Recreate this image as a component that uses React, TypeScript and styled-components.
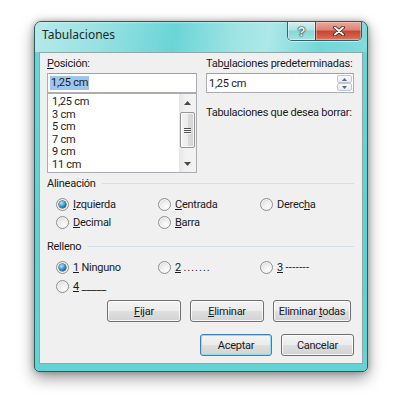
import styled, { createGlobalStyle } from 'styled-components'

const GlobalStyle = createGlobalStyle`
	html, body {
		margin: 0;
		padding: 0;
		background: #fff;
	}
	body {
		font-family: Roboto, 'Liberation Sans', Arial, sans-serif;
		font-size: 11px;
		letter-spacing: -0.25px;
		color: #1b1b1b;
	}
	* {
		box-sizing: border-box;
	}
	u {
		text-underline-offset: 1px;
	}
`

const positions = ['1,25 cm', '3 cm', '5 cm', '7 cm', '9 cm', '11 cm']

const alignOptions = [
	{ text: 'Izquierda', hot: 0, checked: true },
	{ text: 'Centrada', hot: 0 },
	{ text: 'Derecha', hot: 5 },
	{ text: 'Decimal', hot: 0 },
	{ text: 'Barra', hot: 0 },
]

// relleno: number is the mnemonic, leader is the sample of the fill
const fillOptions = [
	{ num: '1', leader: 'Ninguno', spacing: -0.25, checked: true },
	{ num: '2', leader: '.......', spacing: 1 },
	{ num: '3', leader: '-------', spacing: 0.4 },
	{ num: '4', leader: '_____', spacing: 0 },
]

function Hot({ text, at }: { text: string; at: number }) {
	return (
		<span>
			{text.slice(0, at)}
			<u>{text[at]}</u>
			{text.slice(at + 1)}
		</span>
	)
}

function Arrow({ up }: { up?: boolean }) {
	return (
		<svg width="7" height="4" viewBox="0 0 7 4">
			<path d={up ? 'M0 4 L3.5 0 L7 4 Z' : 'M0 0 L3.5 4 L7 0 Z'} fill="#4a4a4a" />
		</svg>
	)
}

function SpinArrow({ up }: { up?: boolean }) {
	return (
		<svg width="5" height="3" viewBox="0 0 5 3">
			<path d={up ? 'M0 3 L2.5 0 L5 3 Z' : 'M0 0 L2.5 3 L5 0 Z'} fill="#4f6a8f" />
		</svg>
	)
}

function App() {
	return (
		<Page>
			<GlobalStyle />
			<Window>
				<TitleBar>
					<Title>Tabulaciones</Title>
					<CaptionGroup>
						<HelpButton>?</HelpButton>
						<CloseButton>
							<svg width="12" height="10" viewBox="0 0 12 10">
								<path d="M2 1.5 L10 8.5 M10 1.5 L2 8.5" stroke="#3b1c16" strokeWidth="3.6" strokeLinecap="round" />
								<path d="M2 1.5 L10 8.5 M10 1.5 L2 8.5" stroke="#fff" strokeWidth="2" strokeLinecap="round" />
							</svg>
						</CloseButton>
					</CaptionGroup>
				</TitleBar>
				<Body>
					<Content>
						<TopGrid>
							<Column>
								<FieldLabel>
									<Hot text="Posición:" at={0} />
								</FieldLabel>
								<TextBox>
									<Selected>1,25 cm</Selected>
								</TextBox>
								<ListBox>
									<ListItems>
										{positions.map((p) => (
											<ListItem key={p}>{p}</ListItem>
										))}
									</ListItems>
									<ScrollBar>
										<ScrollArrow>
											<Arrow up />
										</ScrollArrow>
										<ScrollTrack>
											<Thumb>
												<Grip />
												<Grip />
												<Grip />
											</Thumb>
										</ScrollTrack>
										<ScrollArrow>
											<Arrow />
										</ScrollArrow>
									</ScrollBar>
								</ListBox>
							</Column>
							<Column>
								<FieldLabel>
									<Hot text="Tabulaciones predeterminadas:" at={3} />
								</FieldLabel>
								<SpinBox>
									<SpinValue>1,25 cm</SpinValue>
									<SpinButtons>
										<SpinButton>
											<SpinArrow up />
										</SpinButton>
										<SpinButton>
											<SpinArrow />
										</SpinButton>
									</SpinButtons>
								</SpinBox>
								<FieldLabel $top={13}>Tabulaciones que desea borrar:</FieldLabel>
							</Column>
						</TopGrid>

						<GroupHeader $top={3.5}>
							<span>Alineación</span>
							<Rule />
						</GroupHeader>
						<RadioGrid $top={5.5} $row={18}>
							{alignOptions.map((o) => (
								<RadioRow key={o.text}>
									<RadioDot $checked={o.checked} />
									<Hot text={o.text} at={o.hot} />
								</RadioRow>
							))}
						</RadioGrid>

						<GroupHeader $top={8.5}>
							<span>Relleno</span>
							<Rule />
						</GroupHeader>
						<RadioGrid $top={5.5} $row={19}>
							{fillOptions.map((o) => (
								<RadioRow key={o.num}>
									<RadioDot $checked={o.checked} />
									<span>
										<u>{o.num}</u> <Leader $spacing={o.spacing}>{o.leader}</Leader>
									</span>
								</RadioRow>
							))}
						</RadioGrid>

						<ButtonRow $top={4} $right={3}>
							<Button $w={74}>
								<Hot text="Fijar" at={0} />
							</Button>
							<Button $w={74}>
								<Hot text="Eliminar" at={0} />
							</Button>
							<Button $w={78}>
								<Hot text="Eliminar todas" at={9} />
							</Button>
						</ButtonRow>
						<ButtonRow $top={12} $right={0}>
							<Button $w={72} $primary>
								Aceptar
							</Button>
							<Button $w={73}>Cancelar</Button>
						</ButtonRow>
					</Content>
				</Body>
			</Window>
		</Page>
	)
}

export default App

const Page = styled.div`
	width: 400px;
	height: 397px;
	padding: 21px 0 0 34px;
	overflow: hidden;
`

const Window = styled.div`
	width: 334px;
	height: 351px;
	display: flex;
	flex-direction: column;
	border: 1px solid #2f5b5d;
	border-radius: 7px 7px 5px 5px;
	background: linear-gradient(180deg, #6cd5d6 0%, #5fd1d2 60%, #64d3d4 100%);
	box-shadow:
		0 6px 16px rgba(0, 0, 0, 0.4),
		0 0 6px rgba(0, 0, 0, 0.28);
	overflow: hidden;
`

const TitleBar = styled.div`
	height: 30px;
	flex: none;
	display: flex;
	align-items: flex-start;
	padding: 0 5px 0 7px;
	background:
		linear-gradient(180deg, rgba(255, 255, 255, 0.35) 0px, rgba(255, 255, 255, 0) 2px),
		linear-gradient(
			100deg,
			rgba(255, 255, 255, 0.5) 0%,
			rgba(255, 255, 255, 0.3) 20%,
			rgba(255, 255, 255, 0) 42%,
			rgba(255, 255, 255, 0.35) 60%,
			rgba(255, 255, 255, 0.45) 70%,
			rgba(255, 255, 255, 0.05) 86%,
			rgba(255, 255, 255, 0.15) 100%
		);
`

const Title = styled.div`
	margin-top: 5px;
	font-family: 'Noto Sans', Roboto, sans-serif;
	font-size: 12px;
	line-height: 16px;
	letter-spacing: 0;
	color: #1e2a2a;
`

const CaptionGroup = styled.div`
	margin-left: auto;
	display: flex;
	height: 19px;
	border: 1px solid rgba(30, 50, 60, 0.75);
	border-top: none;
	border-radius: 0 0 5px 5px;
	overflow: hidden;
	box-shadow: 0 1px 0 rgba(255, 255, 255, 0.5);
`

const HelpButton = styled.div`
	width: 27px;
	display: flex;
	align-items: center;
	justify-content: center;
	font-family: 'Liberation Sans', Arial, sans-serif;
	font-weight: bold;
	font-size: 13px;
	letter-spacing: 0;
	color: #f2f6f6;
	text-shadow:
		0 0 1px #1e2e2e,
		0 0 1px #1e2e2e,
		0 0 2px #1e2e2e;
	background: linear-gradient(180deg, #d3f0f0 0%, #aee3e3 45%, #86d6d7 50%, #a5e2e2 100%);
	box-shadow: inset 0 0 0 1px rgba(255, 255, 255, 0.45);
`

const CloseButton = styled.div`
	width: 46px;
	display: flex;
	align-items: center;
	justify-content: center;
	border-left: 1px solid rgba(30, 50, 60, 0.75);
	background: linear-gradient(180deg, #eaa99c 0%, #dc8372 45%, #c8452e 50%, #d3624a 85%, #e0836c 100%);
	box-shadow: inset 0 0 0 1px rgba(255, 220, 210, 0.4);
`

const Body = styled.div`
	flex: 1;
	display: flex;
	padding: 0 4px 7px 4px;
`

const Content = styled.div`
	flex: 1;
	display: flex;
	flex-direction: column;
	background: #f0f0f0;
	border: 1px solid #8fa7a9;
	padding: 4px 8px 7px 7px;
`

const TopGrid = styled.div`
	display: grid;
	grid-template-columns: 150px 148px;
	column-gap: 9px;
`

const Column = styled.div`
	display: flex;
	flex-direction: column;
`

const FieldLabel = styled.div<{ $top?: number }>`
	line-height: 13px;
	height: 13px;
	margin-top: ${(p) => p.$top ?? 0}px;
	margin-bottom: 3px;
	white-space: nowrap;
`

const TextBox = styled.div`
	height: 20px;
	display: flex;
	align-items: center;
	padding: 0 2px;
	background: #fff;
	border: 1px solid #abadb3;
	border-top-color: #a0a2a8;
`

const Selected = styled.span`
	background: #9cc6ee;
	padding: 0 1px;
	line-height: 14px;
`

const ListBox = styled.div`
	height: 80px;
	display: flex;
	background: #fff;
	border: 1px solid #abadb3;
`

const ListItems = styled.div`
	flex: 1;
	padding: 2px 0 0 4px;
`

const ListItem = styled.div`
	line-height: 12.6px;
	height: 12.6px;
`

const ScrollBar = styled.div`
	width: 17px;
	display: flex;
	flex-direction: column;
	background: linear-gradient(90deg, #e6e6e6, #f2f2f2 40%, #f2f2f2);
`

const ScrollArrow = styled.div`
	height: 17px;
	flex: none;
	display: flex;
	align-items: center;
	justify-content: center;
`

const ScrollTrack = styled.div`
	flex: 1;
	padding: 1px 1px 0 1px;
`

const Thumb = styled.div`
	height: 36px;
	display: flex;
	flex-direction: column;
	align-items: center;
	justify-content: center;
	gap: 1px;
	border: 1px solid #979797;
	border-radius: 2px;
	background: linear-gradient(90deg, #f4f4f4 0%, #ececec 50%, #dcdcdc 51%, #d4d4d4 100%);
	box-shadow: inset 0 0 0 1px rgba(255, 255, 255, 0.7);
`

const Grip = styled.div`
	width: 7px;
	height: 1px;
	background: #4e4e4e;
	box-shadow: 0 1px 0 #fff;
`

const SpinBox = styled.div`
	height: 20px;
	display: flex;
	align-items: stretch;
	padding: 1px 1px 1px 2px;
	background: #fff;
	border: 1px solid #abadb3;
	border-top-color: #a0a2a8;
`

const SpinValue = styled.div`
	flex: 1;
	display: flex;
	align-items: center;
`

const SpinButtons = styled.div`
	width: 15px;
	display: flex;
	flex-direction: column;
`

const SpinButton = styled.div`
	flex: 1;
	display: flex;
	align-items: center;
	justify-content: center;
	border: 1px solid #c2c7cf;
	border-radius: 2px;
	background: linear-gradient(180deg, #fbfbfb, #e9ebee);
`

const GroupHeader = styled.div<{ $top: number }>`
	margin-top: ${(p) => p.$top}px;
	height: 13px;
	line-height: 13px;
	display: flex;
	align-items: center;
	gap: 6px;
`

const Rule = styled.div`
	flex: 1;
	height: 1px;
	background: #d5dfe5;
`

const RadioGrid = styled.div<{ $top: number; $row: number }>`
	margin-top: ${(p) => p.$top}px;
	padding-left: 9px;
	display: grid;
	grid-template-columns: 102px 102px auto;
	grid-auto-rows: ${(p) => p.$row}px;
`

const RadioRow = styled.label`
	display: flex;
	align-items: center;
	gap: 4px;
	white-space: nowrap;
`

const Leader = styled.span<{ $spacing: number }>`
	letter-spacing: ${(p) => p.$spacing}px;
`

const RadioDot = styled.span<{ $checked?: boolean }>`
	flex: none;
	width: 13px;
	height: 13px;
	display: flex;
	align-items: center;
	justify-content: center;
	border-radius: 50%;
	border: 1px solid #8e8f8f;
	background: radial-gradient(circle at 65% 70%, #fcfcfc 0%, #eeeeee 45%, #c9c9c9 100%);
	box-shadow: inset 0 0 0 1px #f6f6f6;

	&::after {
		content: '';
		display: ${(p) => (p.$checked ? 'block' : 'none')};
		width: 7px;
		height: 7px;
		border-radius: 50%;
		background: radial-gradient(circle at 35% 30%, #b9ecff 0%, #4eb0e4 35%, #1a5f94 75%, #133e62 100%);
		box-shadow: 0 0 0 0.5px #1b3f5e;
	}
`

const ButtonRow = styled.div<{ $top: number; $right: number }>`
	margin-top: ${(p) => p.$top}px;
	padding-right: ${(p) => p.$right}px;
	display: flex;
	justify-content: flex-end;
	gap: 9px;
`

const Button = styled.button<{ $w: number; $primary?: boolean }>`
	width: ${(p) => p.$w}px;
	height: 22px;
	padding: 0;
	font: inherit;
	letter-spacing: inherit;
	color: #1b1b1b;
	border: 1px solid ${(p) => (p.$primary ? '#3c7fb1' : '#707070')};
	border-radius: 3px;
	background: linear-gradient(180deg, #f3f3f3 0%, #ececec 48%, #dfdfdf 52%, #d2d2d2 100%);
	box-shadow: inset 0 0 0 1px ${(p) => (p.$primary ? '#8fdcf3' : 'rgba(255, 255, 255, 0.8)')};
`
